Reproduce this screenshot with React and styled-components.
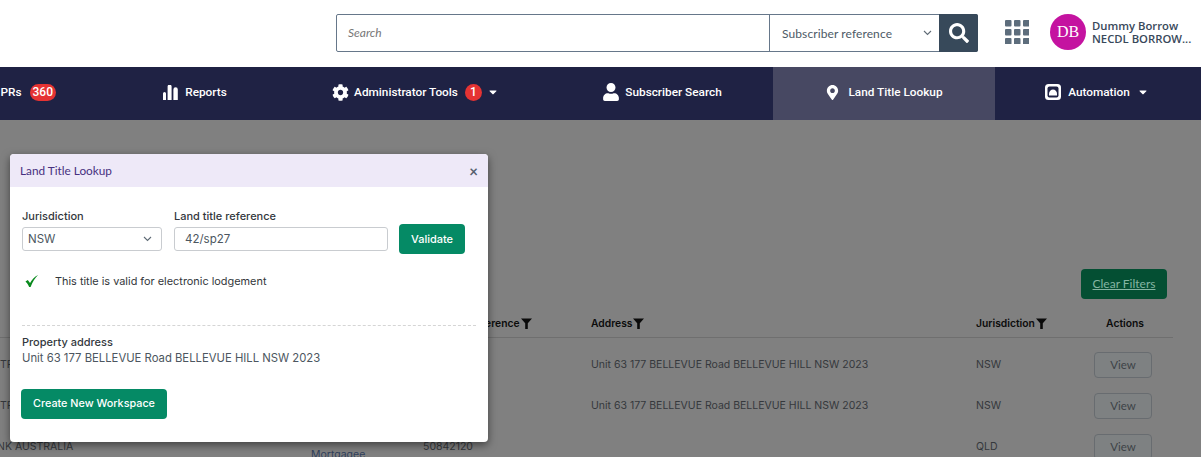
import React from 'react';
import styled, { createGlobalStyle } from 'styled-components';
import { FaCaretDown, FaCog, FaMapMarkerAlt, FaSearch, FaUser } from 'react-icons/fa';

const GlobalStyle = createGlobalStyle`
  html, body { margin: 0; padding: 0; height: 100%; overflow: hidden; background: #808080; }
  body { font-family: 'Inter', 'Liberation Sans', sans-serif; }
  * { box-sizing: border-box; }
`;

const Page = styled.div`
  width: 1201px;
  height: 457px;
  overflow: hidden;
  display: flex;
  flex-direction: column;
`;

const Header = styled.header`
  height: 67px;
  flex: none;
  background: #fff;
  display: flex;
  align-items: flex-start;
  padding: 14px 0 0 336px;
`;

const SearchBox = styled.div`
  width: 642px;
  height: 38px;
  display: flex;
  border: 1px solid #66778a;
  border-radius: 2px;
`;

const SearchInput = styled.div`
  width: 433px;
  padding-left: 11px;
  font: italic 12px/36px 'Lato', sans-serif;
  color: #777;
  border-right: 1px solid #66778a;
`;

const SearchScope = styled.div`
  flex: 1;
  display: flex;
  align-items: center;
  justify-content: space-between;
  padding: 0 8px 0 12px;
  font: 12px 'Lato', sans-serif;
  letter-spacing: 0.1px;
  color: #4d5a66;
`;

const SearchButton = styled.div`
  width: 39px;
  margin: -1px;
  background: #37495a;
  border-radius: 0 2px 2px 0;
  color: #fff;
  display: flex;
  align-items: center;
  justify-content: center;
  font-size: 20px;
`;

const AppsIcon = styled.svg`
  width: 24px;
  height: 24px;
  margin: 6px 0 0 27px;
  fill: #5d6d7c;
`;

const Avatar = styled.div`
  width: 36px;
  height: 36px;
  margin-left: 21px;
  border-radius: 50%;
  background: #c413a0;
  color: #fff;
  font: 16px/36px 'Liberation Serif', serif;
  text-align: center;
`;

const UserName = styled.div`
  margin: 5px 0 0 6px;
  font: 600 11.3px/13px 'Open Sans', sans-serif;
  color: #38485a;
  white-space: nowrap;
`;

const Nav = styled.nav`
  height: 53px;
  flex: none;
  background: #1f2244;
  display: flex;
  justify-content: flex-end;
  overflow: hidden;
  padding-right: 2px;
`;

const NavItem = styled.div`
  width: ${({ $width }) => $width}px;
  flex: none;
  display: flex;
  align-items: center;
  justify-content: ${({ $edge }) => ($edge ? 'flex-end' : 'center')};
  gap: ${({ $gap }) => $gap || 6}px;
  padding: 0 ${({ $edge }) => ($edge ? '54px' : '0')} 3px 0;
  background: ${({ $active }) => ($active ? '#474862' : 'transparent')};
  color: #fff;
  font: 500 11.8px 'Roboto', sans-serif;
  svg { flex: none; }
`;

const Badge = styled.span`
  background: #e53333;
  color: #fff;
  height: 17px;
  min-width: 17px;
  padding: 0 3px;
  margin-left: 2px;
  border-radius: 8.5px;
  font: 500 12px/17px 'Roboto', sans-serif;
  text-align: center;
`;

const Content = styled.main`
  flex: 1;
  position: relative;
  background: #808080;
  min-height: 0;
`;

const Toolbar = styled.div`
  display: flex;
  justify-content: flex-end;
  padding: 149px 34px 0 0;
`;

const ClearFilters = styled.div`
  width: 86px;
  height: 30px;
  border-radius: 4px;
  background: #044f33;
  color: #85b5a3;
  font: 12px/30px 'Lato', sans-serif;
  text-align: center;
  text-decoration: underline;
`;

const TableRow = styled.div`
  width: 1173px;
  display: grid;
  grid-template-columns: 311px 112px 168px 385px 118px 62px;
  align-items: ${({ $head }) => ($head ? 'center' : 'start')};
  height: ${({ $head, $height }) => ($head ? '29px' : `${$height}px`)};
  margin-top: ${({ $head }) => ($head ? '10px' : '0')};
  padding-top: ${({ $head }) => ($head ? '0' : '14px')};
  border-bottom: ${({ $head }) => ($head ? '1px solid #6f6f6f' : 'none')};
`;

const HeadCell = styled.div`
  display: flex;
  align-items: center;
  justify-content: ${({ $center }) => ($center ? 'center' : 'flex-start')};
  gap: 1px;
  font: 600 10.3px 'Inter', sans-serif;
  color: #0c0c0c;
  white-space: nowrap;
`;

const Cell = styled.div`
  font: 10.5px/14px 'Inter', sans-serif;
  color: #35383c;
  white-space: nowrap;
  overflow: hidden;
  margin: 6px 0 0 ${({ $shift }) => ($shift ? '-3px' : '0')};
`;

const TypeCell = styled(Cell)`
  margin-top: -11px;
  line-height: 21px;
  color: #2f3f5c;
`;

const ViewButton = styled.div`
  width: 58px;
  height: 26px;
  border: 1px solid #686c70;
  border-radius: 4px;
  background: #7e8182;
  color: #3d4347;
  font: 11.5px/24px 'Lato', sans-serif;
  text-align: center;
`;

const Modal = styled.section`
  position: absolute;
  left: 10px;
  top: 34px;
  width: 478px;
  height: 288px;
  background: #fff;
  border-radius: 4px;
  box-shadow: 0 3px 9px rgba(0, 0, 0, 0.5);
  overflow: hidden;
`;

const ModalHeader = styled.div`
  height: 33px;
  background: #eee9f8;
  display: flex;
  align-items: center;
  justify-content: space-between;
  padding: 0 10px;
  color: #47307f;
  font: 11.8px 'Lato', sans-serif;
`;

const Close = styled.span`
  color: #56606e;
  font: 700 15px 'Lato', sans-serif;
`;

const ModalBody = styled.div`
  padding: 22px 12px 0;
`;

const FormRow = styled.div`
  display: flex;
  align-items: flex-end;
  gap: 12px;
`;

const Field = styled.div`
  width: ${({ $width }) => $width}px;
  margin-bottom: 2px;
`;

const Label = styled.div`
  font: 500 11px/14px 'Inter', sans-serif;
  color: #33383d;
  margin-bottom: 4px;
`;

const Control = styled.div`
  height: 24px;
  border: 1px solid #c9ccd0;
  border-radius: 3px;
  padding: ${({ $select }) => ($select ? '0 9px 0 5px' : '0 0 0 10px')};
  display: flex;
  align-items: center;
  justify-content: space-between;
  font: 11.5px 'Inter', sans-serif;
  color: #4c5660;
`;

const ValidateButton = styled.div`
  height: 30px;
  width: 66px;
  margin: 0 0 -1px -1px;
  background: #058a65;
  border-radius: 4px;
  color: #fff;
  font: 500 11px/30px 'Inter', sans-serif;
  text-align: center;
`;

const WorkspaceButton = styled(ValidateButton)`
  width: 146px;
  margin: 0 0 0 -1px;
  font-size: 10.8px;
`;

const ValidMessage = styled.div`
  display: flex;
  align-items: center;
  gap: 16px;
  height: 20px;
  margin: 18px 0 0 3px;
  font: 10.9px 'Inter', sans-serif;
  color: #33373b;
`;

const Divider = styled.div`
  height: 1px;
  margin-top: 34px;
  border-top: 1px dashed #d5d5d5;
`;

const AddressLabel = styled(Label)`
  margin: 9px 0 2px;
`;

const AddressValue = styled.div`
  font: 11.3px/14px 'Inter', sans-serif;
  color: #4c5660;
  margin-bottom: 24px;
`;

const Chevron = () => (
  <svg width="9" height="6" viewBox="0 0 9 6" fill="none" stroke="#5f6b76" strokeWidth="1.1">
    <path d="M1 1l3.5 3.5L8 1" />
  </svg>
);

const Funnel = () => (
  <svg width="11" height="11" viewBox="0 0 11 11" fill="#0a0a0a">
    <path d="M0 0.5h11L6.8 5.2V11H4.2V5.2z" />
  </svg>
);

const rows = [
  { key: 'a', name: 'TR', address: 'Unit 63 177 BELLEVUE Road BELLEVUE HILL NSW 2023', state: 'NSW', height: 41 },
  { key: 'b', name: 'TR', address: 'Unit 63 177 BELLEVUE Road BELLEVUE HILL NSW 2023', state: 'NSW', height: 41 },
  { key: 'c', name: 'NK AUSTRALIA', type: true, ref: '50842120', state: 'QLD', height: 60, shift: true },
];

export default function App() {
  return (
    <Page>
      <GlobalStyle />
      <Header>
        <SearchBox>
          <SearchInput>Search</SearchInput>
          <SearchScope>
            Subscriber reference
            <Chevron />
          </SearchScope>
          <SearchButton><FaSearch /></SearchButton>
        </SearchBox>
        <AppsIcon viewBox="0 0 24 24">
          {[0, 9, 18].map((y) =>
            [0, 9, 18].map((x) => <rect key={`${x}-${y}`} x={x} y={y} width="6.5" height="6.5" rx="1" />)
          )}
        </AppsIcon>
        <Avatar>DB</Avatar>
        <UserName>
          Dummy Borrow
          <br />
          NECDL BORROW...
        </UserName>
      </Header>

      <Nav>
        <NavItem $width={254} $edge>
          PRs <Badge>360</Badge>
        </NavItem>
        <NavItem $width={170}>
          <svg width="16" height="15" viewBox="0 0 16 15" fill="#fff">
            <path d="M0 15V8.5a1.5 1.5 0 0 1 3 0V15zM4.6 15V1.6a2 2 0 0 1 4 0V15zM10.4 15V4.5a2.2 2.2 0 0 1 4.4 0V15z" />
          </svg>
          Reports
        </NavItem>
        <NavItem $width={271} $gap={5}>
          <FaCog size={17} />
          Administrator Tools
          <Badge>1</Badge>
          <FaCaretDown size={12} />
        </NavItem>
        <NavItem $width={222} $gap={5}>
          <FaUser size={18} />
          Subscriber Search
        </NavItem>
        <NavItem $width={222} $gap={8} $active>
          <FaMapMarkerAlt size={15} />
          Land Title Lookup
        </NavItem>
        <NavItem $width={204} $gap={7}>
          <svg width="16" height="16" viewBox="0 0 16 16">
            <rect width="16" height="16" rx="3.5" fill="#fff" />
            <rect x="2.5" y="2.5" width="11" height="11" rx="2" fill="#1f2244" />
            <path d="M4 11.5V9.5C4 7.5 6 5.5 8 5.5s4 2 4 4v2z" fill="#fff" />
          </svg>
          Automation
          <FaCaretDown size={12} />
        </NavItem>
      </Nav>

      <Content>
        <Toolbar>
          <ClearFilters>Clear Filters</ClearFilters>
        </Toolbar>
        <TableRow $head>
          <HeadCell />
          <HeadCell>Type</HeadCell>
          <HeadCell>Land title reference <Funnel /></HeadCell>
          <HeadCell>Address <Funnel /></HeadCell>
          <HeadCell>Jurisdiction <Funnel /></HeadCell>
          <HeadCell $center>Actions</HeadCell>
        </TableRow>
        {rows.map((row) => (
          <TableRow key={row.key} $height={row.height}>
            <Cell $shift={row.shift}>{row.name}</Cell>
            {row.type ? (
              <TypeCell>Incoming<br />Mortgagee</TypeCell>
            ) : (
              <Cell />
            )}
            <Cell>{row.ref}</Cell>
            <Cell>{row.address}</Cell>
            <Cell>{row.state}</Cell>
            <ViewButton>View</ViewButton>
          </TableRow>
        ))}

        <Modal>
          <ModalHeader>
            Land Title Lookup
            <Close>×</Close>
          </ModalHeader>
          <ModalBody>
            <FormRow>
              <Field $width={140}>
                <Label>Jurisdiction</Label>
                <Control $select>
                  NSW
                  <Chevron />
                </Control>
              </Field>
              <Field $width={214}>
                <Label>Land title reference</Label>
                <Control>42/sp27</Control>
              </Field>
              <ValidateButton>Validate</ValidateButton>
            </FormRow>
            <ValidMessage>
              <svg width="14" height="14" viewBox="0 0 15 14" fill="#0a8a1e">
                <path d="M0.5 7.5L3 6l2.4 3.2C7.2 5.6 10 2.4 14 0.5 10.6 3.8 8 8 6 13.5H4.4C3.6 11 2.2 9 0.5 7.5z" />
              </svg>
              This title is valid for electronic lodgement
            </ValidMessage>
            <Divider />
            <AddressLabel>Property address</AddressLabel>
            <AddressValue>Unit 63 177 BELLEVUE Road BELLEVUE HILL NSW 2023</AddressValue>
            <WorkspaceButton>Create New Workspace</WorkspaceButton>
          </ModalBody>
        </Modal>
      </Content>
    </Page>
  );
}
